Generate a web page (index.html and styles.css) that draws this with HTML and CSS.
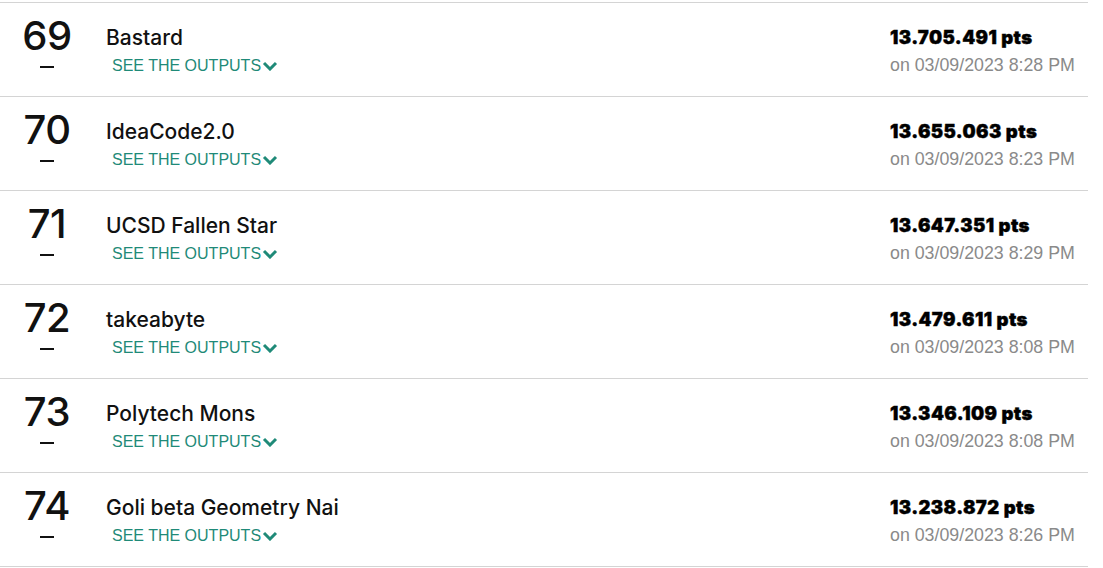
FILE: index.html
```html
<!DOCTYPE html>
<html>
<head>
<meta charset="utf-8">
<link rel="stylesheet" href="styles.css">
</head>
<body>
<div class="board">
  <div class="row">
    <div class="rank"><span class="num">69</span><span class="dash"></span></div>
    <div class="team"><div class="name">Bastard</div><a class="outputs">SEE THE OUTPUTS<svg class="chev" viewBox="0 0 16 10"><path d="M2 2 L8 8 L14 2" /></svg></a></div>
    <div class="score"><div class="pts">13.705.491 pts</div><div class="date">on 03/09/2023 8:28 PM</div></div>
  </div>
  <div class="row">
    <div class="rank"><span class="num">70</span><span class="dash"></span></div>
    <div class="team"><div class="name">IdeaCode2.0</div><a class="outputs">SEE THE OUTPUTS<svg class="chev" viewBox="0 0 16 10"><path d="M2 2 L8 8 L14 2" /></svg></a></div>
    <div class="score"><div class="pts">13.655.063 pts</div><div class="date">on 03/09/2023 8:23 PM</div></div>
  </div>
  <div class="row">
    <div class="rank"><span class="num">71</span><span class="dash"></span></div>
    <div class="team"><div class="name">UCSD Fallen Star</div><a class="outputs">SEE THE OUTPUTS<svg class="chev" viewBox="0 0 16 10"><path d="M2 2 L8 8 L14 2" /></svg></a></div>
    <div class="score"><div class="pts">13.647.351 pts</div><div class="date">on 03/09/2023 8:29 PM</div></div>
  </div>
  <div class="row">
    <div class="rank"><span class="num">72</span><span class="dash"></span></div>
    <div class="team"><div class="name">takeabyte</div><a class="outputs">SEE THE OUTPUTS<svg class="chev" viewBox="0 0 16 10"><path d="M2 2 L8 8 L14 2" /></svg></a></div>
    <div class="score"><div class="pts">13.479.611 pts</div><div class="date">on 03/09/2023 8:08 PM</div></div>
  </div>
  <div class="row">
    <div class="rank"><span class="num">73</span><span class="dash"></span></div>
    <div class="team"><div class="name">Polytech Mons</div><a class="outputs">SEE THE OUTPUTS<svg class="chev" viewBox="0 0 16 10"><path d="M2 2 L8 8 L14 2" /></svg></a></div>
    <div class="score"><div class="pts">13.346.109 pts</div><div class="date">on 03/09/2023 8:08 PM</div></div>
  </div>
  <div class="row last">
    <div class="rank"><span class="num">74</span><span class="dash"></span></div>
    <div class="team"><div class="name">Goli beta Geometry Nai</div><a class="outputs">SEE THE OUTPUTS<svg class="chev" viewBox="0 0 16 10"><path d="M2 2 L8 8 L14 2" /></svg></a></div>
    <div class="score"><div class="pts">13.238.872 pts</div><div class="date">on 03/09/2023 8:26 PM</div></div>
  </div>
</div>
</body>
</html>
```
FILE: styles.css
```css
html, body {
  margin: 0;
  padding: 0;
  background: #ffffff;
}
body {
  font-family: Inter, "Noto Sans", sans-serif;
  color: #111;
}
.board {
  width: 1088px;
  padding-top: 2px;
}
.row {
  display: flex;
  align-items: flex-start;
  height: 93px;
  border-top: 1px solid #d4d4d4;
}
.row.last {
  border-bottom: 1px solid #d4d4d4;
}
.rank {
  width: 94px;
  display: flex;
  flex-direction: column;
  align-items: center;
  padding-top: 10px;
}
.num {
  font-size: 40px;
  font-weight: 500;
  line-height: 46px;
  letter-spacing: -0.5px;
  color: #111;
}
.dash {
  width: 14px;
  height: 2px;
  background: #111;
  margin-top: 7px;
}
.team {
  flex: 1;
  padding-left: 12px;
  padding-top: 22px;
}
.name {
  font-size: 21px;
  font-weight: 500;
  line-height: 26px;
  color: #111;
}
.outputs {
  display: flex;
  align-items: center;
  margin-left: 6px;
  margin-top: 6px;
  font-family: "Liberation Sans", Arial, sans-serif;
  font-size: 16px;
  line-height: 18px;
  color: #1f8a78;
}
.chev {
  width: 16px;
  height: 10px;
  margin-left: 1px;
  fill: none;
  stroke: #1f8a78;
  stroke-width: 3;
}
.score {
  width: 198px;
  padding-top: 23px;
}
.pts {
  font-family: Inter, sans-serif;
  font-weight: 900;
  font-size: 18.5px;
  line-height: 23px;
  letter-spacing: 0.4px;
  color: #000;
  -webkit-text-stroke: 0.4px #000;
}
.date {
  font-family: "Liberation Sans", Arial, sans-serif;
  font-size: 17.8px;
  line-height: 22px;
  color: #8a8a8a;
  margin-top: 5px;
}
```
